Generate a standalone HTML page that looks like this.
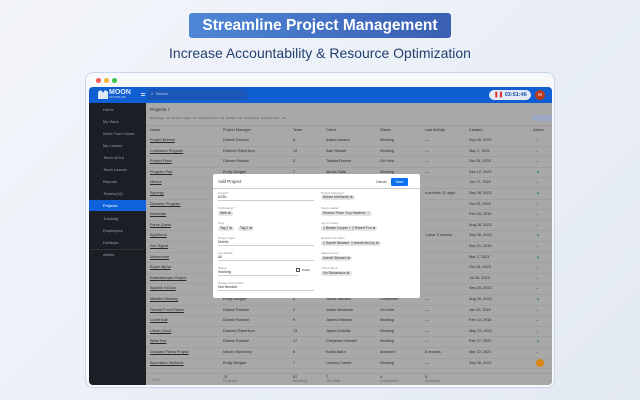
<!DOCTYPE html>
<html><head><meta charset="utf-8"><style>
*{margin:0;padding:0;box-sizing:border-box}
body{width:640px;height:400px;overflow:hidden;font-family:"Liberation Sans",sans-serif;background:linear-gradient(135deg,#f3f5fa,#e9eef6 60%,#e3e9f3);position:relative}
.a{position:absolute;white-space:nowrap}
.badge{left:189px;top:13px;width:262px;height:25px;background:linear-gradient(90deg,#4f86d6,#3a5fb3);border-radius:3px;color:#fff;font-weight:bold;font-size:15.5px;text-align:center;line-height:25px}
.sub{left:0;width:640px;top:45px;text-align:center;font-size:14px;color:#23406f}
.card{left:85px;top:72px;width:470px;height:316px;background:#f6f8fc;border:1px solid #c9d6ea;border-radius:8px}
.frame{left:89px;top:87px;width:463px;height:298px;border-radius:4px;overflow:hidden;background:#a7a7a7}
.hdr{left:0;top:0;width:463px;height:16px;background:#0f5fd2}
.side{left:0;top:16px;width:57px;height:282px;background:#1b1e25}
.si{font-size:4px;color:#9aa0aa;left:14px}
.cont{left:57px;top:16px;width:406px;height:282px;background:#a8a8a8}
.t{font-size:3.8px;color:#2a2a2a}
.u{text-decoration:underline}
.line{height:1px;background:#9c9c9c;left:0;width:406px}
.modal{left:124px;top:87px;width:207px;height:124px;background:#fff;border-radius:2px}
.m{font-size:3.6px;color:#333}
.ml{font-size:3px;color:#888}
.chip{background:#e4e4e4;border-radius:4px;padding:0 2px;font-size:3.4px;line-height:5px;color:#333}
.ul{height:0.5px;background:#ccc}
</style></head><body>
<div class="a badge">Streamline Project Management</div>
<div class="a sub">Increase Accountability &amp; Resource Optimization</div>
<div class="a card"></div>
<div class="a" style="left:96px;top:78px;width:5px;height:5px;border-radius:50%;background:#f35b56"></div>
<div class="a" style="left:104px;top:78px;width:5px;height:5px;border-radius:50%;background:#f7b531"></div>
<div class="a" style="left:112px;top:78px;width:5px;height:5px;border-radius:50%;background:#3cc14a"></div>
<div class="a frame">
 <div class="a hdr">
  <div class="a" style="left:9px;top:3px;width:10px;height:9px;background:#dfe8f7;clip-path:polygon(0 100%,0 20%,30% 0,50% 30%,70% 0,100% 20%,100% 100%)"></div>
  <div class="a" style="left:20px;top:2px;font-size:7px;font-weight:bold;color:#e8eef9">MOON</div>
  <div class="a" style="left:20px;top:9px;font-size:2.5px;color:#c8d6f0">TECHNOLABS</div>
  <div class="a" style="left:52px;top:6px;width:4px;height:3px;border-top:1px solid #cfd9ee;border-bottom:1px solid #cfd9ee"></div>
  <div class="a" style="left:58px;top:2px;width:100px;height:11px;background:#1a55b8;border-radius:2px"></div>
  <div class="a" style="left:62px;top:4px;font-size:4px;color:#b8c8e8">⌕ &nbsp;Search</div>
  <div class="a" style="left:400px;top:3px;width:42px;height:10px;background:#e4ebf6;border-radius:5px;font-size:5.5px;font-weight:bold;color:#1a4fa8;line-height:10px;padding-left:5px"><span style="color:#d33">❚❚</span> 03:51:46</div>
  <div class="a" style="left:446px;top:3px;width:10px;height:10px;border-radius:50%;background:#b83a1a;color:#fff;font-size:4.5px;text-align:center;line-height:10px">M</div>
 </div>
 <div class="a side">
  <div class="a" style="left:0;top:97px;width:57px;height:11px;background:#0e63dc"></div>
  <div class="a si" style="top:4px">Home</div>
  <div class="a si" style="top:16px">My Work</div>
  <div class="a si" style="top:28px">Work From Home</div>
  <div class="a si" style="top:40px">My Leaves</div>
  <div class="a si" style="top:52px">Team InOut</div>
  <div class="a si" style="top:64px">Team Leaves</div>
  <div class="a si" style="top:76px">Reports</div>
  <div class="a si" style="top:88px">Tickets(10)</div>
  <div class="a si" style="top:100px;color:#fff">Projects</div>
  <div class="a si" style="top:113px">Tracking</div>
  <div class="a si" style="top:125px">Employees</div>
  <div class="a si" style="top:137px">Holidays</div>
  <div class="a" style="left:2px;top:146px;width:53px;height:0.5px;background:#333"></div>
  <div class="a si" style="top:149px">Admin</div>
 </div>
 <div class="a cont">
  <div class="a t" style="left:4px;top:4px;font-size:4.5px">Projects ⌕</div>
  <div class="a t" style="left:4px;top:13px;font-size:2.8px;color:#555">⊕ Manager : All &nbsp; ⊕ Team Leader : All &nbsp; ⊕ Sales Person : All &nbsp; ⊕ Client : All &nbsp; ⊕ All Status &nbsp; ⊕ Project Type : All</div>
  <div class="a" style="left:386px;top:12px;width:25px;height:6px;border-radius:3px;background:#9aa8c4"></div>
  <div class="a line" style="top:22px"></div>
  <div class="a t" style="left:4px;top:25px">Name</div><div class="a t" style="left:77px;top:25px">Project Manager</div><div class="a t" style="left:147px;top:25px">Team</div><div class="a t" style="left:180px;top:25px">Client</div><div class="a t" style="left:234px;top:25px">Status</div><div class="a t" style="left:279px;top:25px">Last Activity</div><div class="a t" style="left:323px;top:25px">Created</div><div class="a t" style="left:387px;top:25px">Action</div>
  <div id="rows"></div>
  <div class="a line" style="top:270px"></div>
  <div class="a t" style="left:4px;top:274px;color:#777">‹ 50 ▾ ›</div>
  <div class="a t" style="left:77px;top:272px;line-height:4px">73<br><span style="color:#666">Projects</span></div>
  <div class="a t" style="left:147px;top:272px;line-height:4px">67<br><span style="color:#666">Working</span></div>
  <div class="a t" style="left:180px;top:272px;line-height:4px">7<br><span style="color:#666">On Hold</span></div>
  <div class="a t" style="left:234px;top:272px;line-height:4px">4<br><span style="color:#666">Completed</span></div>
  <div class="a t" style="left:279px;top:272px;line-height:4px">5<br><span style="color:#666">Archived</span></div>
  <div class="a" style="left:390px;top:256px;width:8px;height:8px;border-radius:50%;background:#d98613"></div>
 </div>
 <div class="a modal">
  <div class="a m" style="left:5px;top:5px;font-size:4.5px">Add Project</div>
  <div class="a m" style="left:163px;top:6px;font-size:3.4px">Cancel</div>
  <div class="a" style="left:178px;top:4px;width:17px;height:8px;background:#0d72f0;border-radius:1px;color:#fff;font-size:3.4px;text-align:center;line-height:8px">Save</div>
  <div class="a ul" style="left:0;top:14px;width:207px"></div>
  <div class="a ml" style="left:5px;top:17px">Project*</div><div class="a m" style="left:5px;top:21px">ASDL</div><div class="a ul" style="left:5px;top:26px;width:96px"></div>
  <div class="a ml" style="left:5px;top:32px">Technology*</div><div class="a chip" style="left:5px;top:37px">Web ⊗</div>
  <div class="a ml" style="left:5px;top:47px">Tags</div><div class="a chip" style="left:5px;top:52px">Tag 1 ⊗</div><div class="a chip" style="left:25px;top:52px">Tag 2 ⊗</div>
  <div class="a ml" style="left:5px;top:62px">Project Type</div><div class="a m" style="left:5px;top:66px">Mobile</div><div class="a ul" style="left:5px;top:71px;width:96px"></div>
  <div class="a ml" style="left:5px;top:77px">Log Mobile</div><div class="a m" style="left:5px;top:81px">All</div><div class="a ul" style="left:5px;top:86px;width:96px"></div>
  <div class="a ml" style="left:5px;top:92px">Status</div><div class="a m" style="left:5px;top:96px">Working</div><div class="a ul" style="left:5px;top:101px;width:80px"></div>
  <div class="a" style="left:83px;top:94px;width:4px;height:4px;border:0.5px solid #555"></div><div class="a m" style="left:89px;top:94px;font-size:3px">Public</div>
  <div class="a ml" style="left:5px;top:107px">Google Drive folder</div><div class="a m" style="left:5px;top:111px">Not Needed</div><div class="a ul" style="left:5px;top:116px;width:96px"></div>
  <div class="a ml" style="left:108px;top:17px">Project Manager*</div><div class="a chip" style="left:108px;top:21px">Marvin McKinney ⊗</div>
  <div class="a ml" style="left:108px;top:32px">Team Leader</div><div class="a chip" style="left:108px;top:37px">Eleanor Pena &nbsp;Guy Hawkins ⋮</div>
  <div class="a ml" style="left:108px;top:47px">Jay It's Team</div><div class="a chip" style="left:108px;top:52px">▯ Bessie Cooper ⊗</div><div class="a chip" style="left:137px;top:52px">▯ Robert Fox ⊗</div>
  <div class="a ml" style="left:108px;top:62px">Dawson It's Team</div><div class="a chip" style="left:108px;top:67px">▯ Darrell Steward &nbsp;▯ Arlene McCoy ⊗</div>
  <div class="a ml" style="left:108px;top:77px">Sales Person</div><div class="a chip" style="left:108px;top:82px">Darrell Steward ⊗</div>
  <div class="a ml" style="left:108px;top:92px">Client Name</div><div class="a chip" style="left:108px;top:97px">Viv Richardson ⊗</div>
 </div>
</div>
<script>
var d=[["Project Breeze","Dianne Russell","8","Adison Anand","Working","—","Sep 26, 2022"],["Command Program","Darlene Robertson","12","Zain Rosser","Working","—","May 1, 2021"],["Project Point","Dianne Russell","3","Tatiana Rosser","On Hold","—","Oct 26, 2023"],["Program Pad","Emily Morgan","7","Akram Safa","Working","—","Dec 12, 2022"],["Mecha","","","","","","Jun 17, 2022"],["Synergy","","","","","a months 21 days","Sep 28, 2023"],["Dynamic Program","","","","","","Oct 23, 2022"],["Illuminate","","","","","","Feb 18, 2019"],["Force Quest","","","","","","Aug 28, 2023"],["AppSumo","","","","","1 year 3 months","Sep 26, 2023"],["Zen Signal","","","","","","Sep 21, 2019"],["Momentum","","","","","","Mar 2, 2023"],["Super Alpha","","","","","","Oct 26, 2023"],["Kaleidoscopic Project","","","","","","Jul 26, 2023"],["Sparkle It Docs","","","","","","Sep 26, 2023"],["Maestro Monkey","Emily Morgan","5","Jakob Vaccaro","Completed","—","Aug 26, 2023"],["Firecall Fund Raiser","Dianne Russell","2","Justin Workman","On Hold","—","Jan 20, 2022"],["Curve Ball","Dianne Russell","9","James Ekstrom","Working","—","Feb 10, 2018"],["Urban Cloud","Darlene Robertson","13","Jaylon Dokidis","Working","—","May 22, 2021"],["West End","Dianne Russell","17","Cheyenne Herwitz","Working","—","Feb 27, 2020"],["Crossed Palms Project","Marvin McKinney","6","Kadin Bator","Archived","8 months","Mar 10, 2021"],["Ascension Ventures","Emily Morgan","7","Lindsey Carder","Working","—","Sep 26, 2022"]];
var xs=[4,77,147,180,234,279,323],h="";
d.forEach(function(r,i){var y=35+i*10.6;for(var j=0;j<7;j++){if(r[j])h+='<div class="a t'+(j==0?' u':'')+'" style="left:'+xs[j]+'px;top:'+y+'px">'+r[j]+'</div>';}
h+='<div class="a t" style="left:390px;top:'+y+'px">'+([3,5,9,11,15,19].indexOf(i)>=0?'<span style="color:#2a8a3a">▲</span>':'–')+'</div>';
h+='<div class="a line" style="top:'+(y+7.5)+'px;background:#a0a0a0"></div>';});
document.getElementById("rows").innerHTML=h;
</script>
</body></html>
